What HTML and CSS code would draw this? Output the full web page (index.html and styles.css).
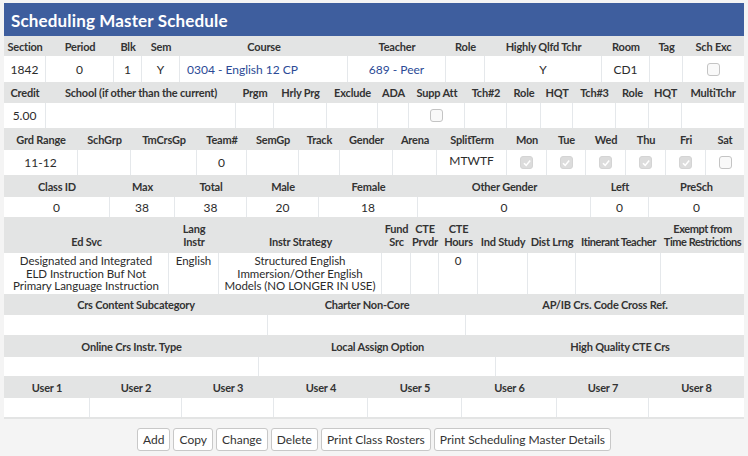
FILE: index.html
```html
<!DOCTYPE html>
<html>
<head>
<meta charset="utf-8">
<link rel="stylesheet" href="styles.css">
</head>
<body>
<div class="panel">
  <div class="title">Scheduling Master Schedule</div>

  <div class="grp r1">
    <div class="h">Section</div><div class="h">Period</div><div class="h">Blk</div><div class="h">Sem</div><div class="h">Course</div><div class="h">Teacher</div><div class="h">Role</div><div class="h">Highly Qlfd Tchr</div><div class="h">Room</div><div class="h">Tag</div><div class="h">Sch Exc</div>
    <div class="d">1842</div><div class="d">0</div><div class="d">1</div><div class="d">Y</div><div class="d left link">0304 - English 12 CP</div><div class="d link">689 - Peer</div><div class="d"></div><div class="d">Y</div><div class="d">CD1</div><div class="d"></div><div class="d"><span class="cb"></span></div>
  </div>

  <div class="grp r2">
    <div class="h">Credit</div><div class="h">School (if other than the current)</div><div class="h">Prgm</div><div class="h">Hrly Prg</div><div class="h">Exclude</div><div class="h">ADA</div><div class="h">Supp Att</div><div class="h">Tch#2</div><div class="h">Role</div><div class="h">HQT</div><div class="h">Tch#3</div><div class="h">Role</div><div class="h">HQT</div><div class="h">MultiTchr</div>
    <div class="d">5.00</div><div class="d"></div><div class="d"></div><div class="d"></div><div class="d"></div><div class="d"></div><div class="d"><span class="cb"></span></div><div class="d"></div><div class="d"></div><div class="d"></div><div class="d"></div><div class="d"></div><div class="d"></div><div class="d"></div>
  </div>

  <div class="grp r3">
    <div class="h">Grd Range</div><div class="h">SchGrp</div><div class="h">TmCrsGp</div><div class="h">Team#</div><div class="h">SemGp</div><div class="h">Track</div><div class="h">Gender</div><div class="h">Arena</div><div class="h">SplitTerm</div><div class="h">Mon</div><div class="h">Tue</div><div class="h">Wed</div><div class="h">Thu</div><div class="h">Fri</div><div class="h">Sat</div>
    <div class="d">11-12</div><div class="d"></div><div class="d"></div><div class="d">0</div><div class="d"></div><div class="d"></div><div class="d"></div><div class="d"></div><div class="d top">MTWTF</div>
    <div class="d"><span class="cb on"><svg viewBox="0 0 12 12" width="12" height="12"><polyline points="3,6.2 5.2,8.4 9.2,3.6" fill="none" stroke="#fff" stroke-width="1.6"/></svg></span></div>
    <div class="d"><span class="cb on"><svg viewBox="0 0 12 12" width="12" height="12"><polyline points="3,6.2 5.2,8.4 9.2,3.6" fill="none" stroke="#fff" stroke-width="1.6"/></svg></span></div>
    <div class="d"><span class="cb on"><svg viewBox="0 0 12 12" width="12" height="12"><polyline points="3,6.2 5.2,8.4 9.2,3.6" fill="none" stroke="#fff" stroke-width="1.6"/></svg></span></div>
    <div class="d"><span class="cb on"><svg viewBox="0 0 12 12" width="12" height="12"><polyline points="3,6.2 5.2,8.4 9.2,3.6" fill="none" stroke="#fff" stroke-width="1.6"/></svg></span></div>
    <div class="d"><span class="cb on"><svg viewBox="0 0 12 12" width="12" height="12"><polyline points="3,6.2 5.2,8.4 9.2,3.6" fill="none" stroke="#fff" stroke-width="1.6"/></svg></span></div>
    <div class="d"><span class="cb"></span></div>
  </div>

  <div class="grp r4">
    <div class="h">Class ID</div><div class="h">Max</div><div class="h">Total</div><div class="h">Male</div><div class="h">Female</div><div class="h">Other Gender</div><div class="h">Left</div><div class="h">PreSch</div>
    <div class="d">0</div><div class="d">38</div><div class="d">38</div><div class="d">20</div><div class="d">18</div><div class="d">0</div><div class="d">0</div><div class="d">0</div>
  </div>

  <div class="grp r5">
    <div class="h bot">Ed Svc</div><div class="h bot">Lang<br>Instr</div><div class="h bot">Instr Strategy</div><div class="h bot">Fund<br>Src</div><div class="h bot">CTE<br>Prvdr</div><div class="h bot">CTE<br>Hours</div><div class="h bot">Ind Study</div><div class="h bot">Dist Lrng</div><div class="h bot tight">Itinerant Teacher</div><div class="h bot tight">Exempt from<br>Time Restrictions</div>
    <div class="d tall">Designated and Integrated<br>ELD Instruction Buf Not<br>Primary Language Instruction</div><div class="d tall">English</div><div class="d tall">Structured English<br>Immersion/Other English<br>Models (NO LONGER IN USE)</div><div class="d tall"></div><div class="d tall"></div><div class="d tall">0</div><div class="d tall"></div><div class="d tall"></div><div class="d tall"></div><div class="d tall"></div>
  </div>

  <div class="grp r6">
    <div class="h">Crs Content Subcategory</div><div class="h">Charter Non-Core</div><div class="h">AP/IB Crs. Code Cross Ref.</div>
    <div class="d"></div><div class="d"></div><div class="d"></div>
  </div>

  <div class="grp r7">
    <div class="h">Online Crs Instr. Type</div><div class="h">Local Assign Option</div><div class="h">High Quality CTE Crs</div>
    <div class="d"></div><div class="d"></div><div class="d"></div>
  </div>

  <div class="grp r8">
    <div class="h">User 1</div><div class="h">User 2</div><div class="h">User 3</div><div class="h">User 4</div><div class="h">User 5</div><div class="h">User 6</div><div class="h">User 7</div><div class="h">User 8</div>
    <div class="d"></div><div class="d"></div><div class="d"></div><div class="d"></div><div class="d"></div><div class="d"></div><div class="d"></div><div class="d"></div>
  </div>
</div>

<div class="buttons">
  <button class="btn">Add</button><button class="btn">Copy</button><button class="btn">Change</button><button class="btn">Delete</button><button class="btn">Print Class Rosters</button><button class="btn">Print Scheduling Master Details</button>
</div>
</body>
</html>
```

FILE: styles.css
```css
* { box-sizing: border-box; }
html, body { margin: 0; padding: 0; }
body {
  background: #f4f4f4;
  font-family: Lato, "Open Sans", sans-serif;
  color: #2b2b2b;
  width: 748px;
  height: 456px;
  overflow: hidden;
}
.panel {
  margin: 3px 0 0 4px;
  width: 740px;
  background: #fff;
  border-bottom: 2px solid #e3e4e4;
}
.title {
  height: 33px;
  background: #3e5e9e;
  color: #fff;
  font-weight: 700;
  font-size: 17px;
  letter-spacing: 0.15px;
  padding: 7px 0 0 7px;
}
.grp { display: grid; }
.h {
  background: #e3e4e4;
  font-size: 11px;
  font-weight: 700;
  color: #333;
  letter-spacing: -0.2px;
  display: flex;
  align-items: center;
  justify-content: center;
  text-align: center;
  white-space: nowrap;
  line-height: 13px;
}
.h.bot { align-items: flex-end; padding-bottom: 5px; }
.h.tight { letter-spacing: -0.45px; }
.d {
  background: #fff;
  font-size: 12px;
  display: flex;
  align-items: center;
  justify-content: center;
  text-align: center;
  border-right: 1px solid #e5e8eb;
  white-space: nowrap;
}
.d:last-child { border-right: none; }
.d.left { justify-content: flex-start; padding-left: 7px; }
.d.top { align-items: flex-start; padding-top: 3px; }
.d.tall { align-items: flex-start; padding-top: 2px; font-size: 11.5px; line-height: 12.5px; letter-spacing: -0.05px; }
.link { color: #2b4a96; }
.cb {
  display: inline-block;
  width: 13px;
  height: 13px;
  border: 1px solid #c4c4c4;
  border-radius: 3px;
  background: #f9f9f9;
}
.cb.on {
  background: #dcdcdc;
  border-color: #d4d4d4;
}
.cb svg { display: block; margin: -0.5px 0 0 -0.5px; }

.r1 { grid-template-columns: 42px 68px 28px 38px 168px 98px 39px 117px 48px 33px 61px; grid-template-rows: 20px 26px; }
.r2 { grid-template-columns: 42px 190px 38px 53px 51px 31px 56px 42px 34px 32px 43px 33px 33px 62px; grid-template-rows: 21px 25px; }
.r3 { grid-template-columns: 74px 53px 66px 50px 52px 41px 53px 44px 70px 40px 39px 40px 40px 40px 38px; grid-template-rows: 22px 25px; }
.r4 { grid-template-columns: 106px 65px 72px 72px 99px 173px 58px 95px; grid-template-rows: 22px 20px; }
.r5 { grid-template-columns: 165px 50px 163px 29px 28px 39px 50px 48px 85px 83px; grid-template-rows: 36px 41px; }
.r6 { grid-template-columns: 264px 198px 278px; grid-template-rows: 21px 20px; }
.r7 { grid-template-columns: 255px 237px 248px; grid-template-rows: 22px 19px; }
.r8 { grid-template-columns: 86px 92px 92px 94px 94px 95px 92px 95px; grid-template-rows: 22px 19px; }

.buttons {
  display: flex;
  justify-content: center;
  gap: 3px;
  margin-top: 9px;
}
.btn {
  font-family: Lato, "Open Sans", sans-serif;
  font-size: 12px;
  color: #333;
  background: #fff;
  border: 1px solid #c8c8c8;
  border-radius: 3px;
  height: 23px;
  padding: 0 5px;
}
```
